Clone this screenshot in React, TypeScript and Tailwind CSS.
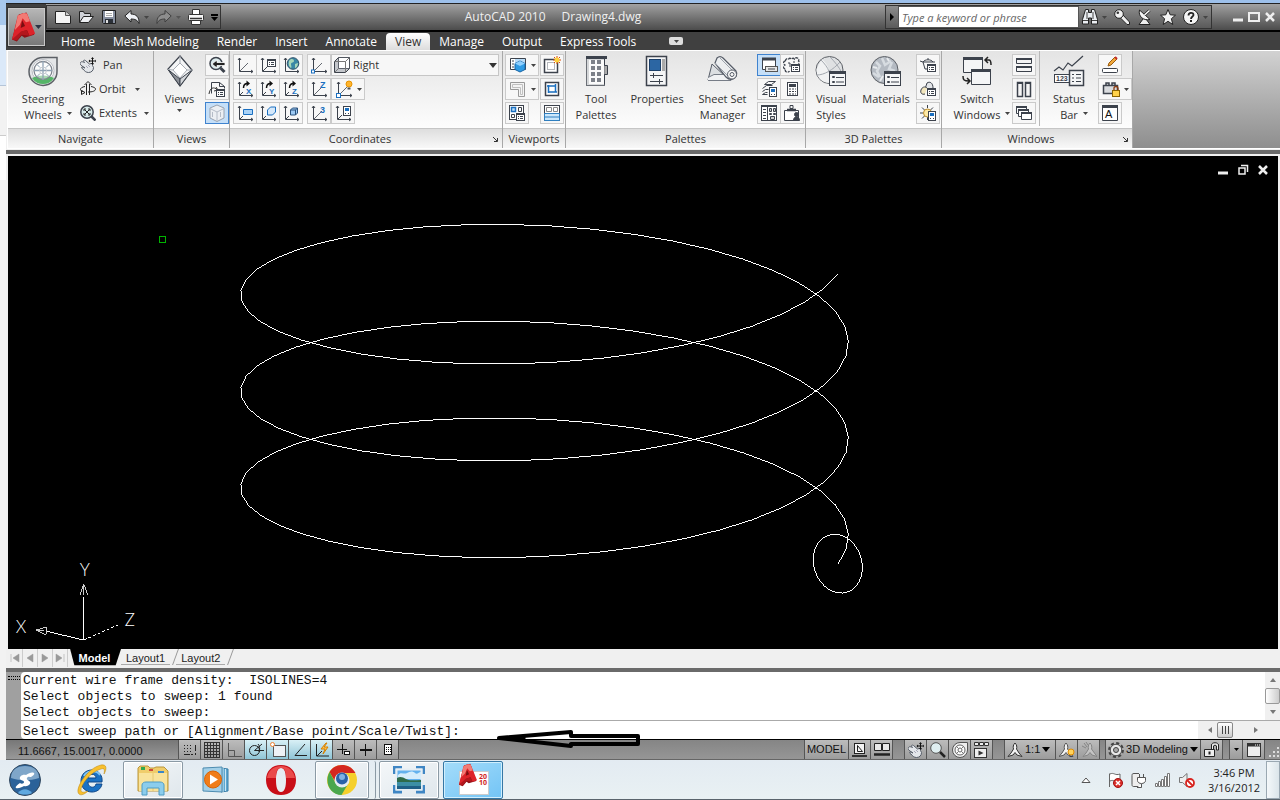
import { useState } from 'react';
import type { ReactNode } from 'react';
import clsx from 'clsx';

const INK = '#3c424c';
const BLUE = '#1a6fc0';

/* ---------- drawing helpers ---------- */

function Svg({ size = 16, children }: { size?: number; children: ReactNode }) {
  return (
    <svg width={size} height={size} viewBox={`0 0 ${size} ${size}`} fill="none" stroke={INK} className="shrink-0" aria-hidden="true">
      {children}
    </svg>
  );
}

function Caret({ className = 'text-[#444]' }: { className?: string }) {
  return (
    <svg width="5" height="3" viewBox="0 0 5 3" className={clsx('shrink-0', className)} aria-hidden="true">
      <path d="M0 0h5L2.5 3z" fill="currentColor" />
    </svg>
  );
}

function ListBadge({ x = 7, y = 7 }: { x?: number; y?: number }) {
  return (
    <g transform={`translate(${x} ${y})`}>
      <rect x="0.5" y="0.5" width="8" height="7" fill="#fff" />
      <path d="M0 1h9" strokeWidth="2" />
      <path d="M2 3.5h1M4 3.5h3M2 5.5h1M4 5.5h3" />
    </g>
  );
}

function CalcBadge({ x = 8, y = 6 }: { x?: number; y?: number }) {
  return (
    <g transform={`translate(${x} ${y})`}>
      <rect x="0.5" y="0.5" width="7" height="9" fill="#fff" />
      <rect x="2" y="2" width="4" height="3" fill={BLUE} stroke="none" />
      <path d="M2 7.5h1M5 7.5h1" />
    </g>
  );
}

function Axes({ diagonal = false, children }: { diagonal?: boolean; children?: ReactNode }) {
  return (
    <Svg size={18}>
      <path d="M3.5 2v13.5H17M2 4l1.5-2L5 4M15 14l2 1.5-2 1.5" />
      {diagonal && <path d="M4 15l8-8" strokeWidth="0.8" />}
      {children}
    </Svg>
  );
}

function RotateAxis({ letter }: { letter: string }) {
  return (
    <Axes>
      <path d="M4 15l3-3" />
      <path d="M7.5 8c0-3 1-4.5 4-4.5" stroke="#111" strokeWidth="1.5" />
      <path d="M10.5 .5l3.5 3-3.500 3z" fill="#111" stroke="none" />
      <text x="10" y="14" fontSize="8" fontWeight="700" fontFamily="Liberation Sans, sans-serif" fill={BLUE} stroke="none">{letter}</text>
    </Axes>
  );
}

const icons: Record<string, ReactNode> = {
  newFile: (
    <Svg><path d="M.5 2.5h10l5 4v8H.5z" fill="#f4f4f4" stroke="#222" /><path d="M10.5 2.5v4h5" stroke="#555" fill="#cfcfcf" /></Svg>
  ),
  open: (
    <Svg>
      <path d="M1.5 13.5v-11h4l1 2h6v3" fill="#cfd2d8" stroke="#222" />
      <path d="M1.5 13.5l4-6h10l-5 6z" fill="#eef0f3" stroke="#222" />
    </Svg>
  ),
  save: (
    <Svg>
      <path d="M1.5 1.5h13v13h-12l-1-1z" fill="#8890a0" stroke="#222" />
      <rect x="4" y="2" width="8" height="6" fill="#fff" stroke="none" />
      <path d="M5 4.5h6M5 6.5h6" stroke="#aaa" />
      <rect x="4" y="10" width="8" height="4" fill="#2b3038" stroke="none" />
      <rect x="5" y="11" width="2" height="3" fill="#ddd" stroke="none" />
    </Svg>
  ),
  undo: <Svg><path d="M.8 7L7 1.500V5c5 0 8.500 3 8 9.500-1.500-3.500-4-4.500-8-4.500v3z" fill="#eef0f4" stroke="#222" /></Svg>,
  redo: <Svg><path d="M15.200 7L9 1.500V5c-5 0-8.500 3-8 9.500C2.500 11 5 10 9 10v3z" fill="#8d8d8d" stroke="#3f3f3f" /></Svg>,
  print: (
    <Svg>
      <path d="M4.500 5V.5h7V5" fill="#fff" stroke="#333" />
      <rect x="0.5" y="5.500" width="15" height="6" rx="1" fill="#f6f6f6" stroke="#333" />
      <path d="M2 9.500h12" stroke="#333" strokeWidth="1.500" />
      <path d="M3.500 15.500v-4h9v4z" fill="#fff" stroke="#333" />
    </Svg>
  ),
  binoculars: (
    <Svg>
      <path d="M3.500.5h3v3h3v-3h3l3 10v4.500h-6V9h-3v6h-6v-4.500z" fill="#eceff3" stroke="#222" />
      <path d="M1 11.500h5M10 11.500h5M5 3v7M11 3v7" stroke="#444" />
    </Svg>
  ),
  key: (
    <Svg>
      <path d="M8.500 5.500l7 7.500v2.500h-2.500L6 8.500z" fill="#eee" stroke="#222" />
      <circle cx="5" cy="5" r="4.300" fill="#f2f2f2" stroke="#222" />
      <circle cx="3.800" cy="3.800" r="1.300" fill="#333" stroke="none" />
    </Svg>
  ),
  dish: (
    <Svg>
      <path d="M6 10l-4 5.500h11L9 10" fill="#eee" stroke="#222" />
      <path d="M2.500 1C1 7 6 12 13 10.500z" fill="#f4f4f4" stroke="#222" />
      <path d="M7.500 6l5-4.500" stroke="#222" strokeWidth="3" />
      <path d="M7.500 6l5-4.500" stroke="#fff" strokeWidth="1.500" />
    </Svg>
  ),
  star: <Svg><path d="M8 .5l2.200 5.300 5.300.4-4.100 3.500 1.400 5.800L8 12.300l-4.800 3.200 1.400-5.800L.5 6.200l5.300-.4z" fill="#f4f4f4" stroke="#222" /></Svg>,
  help: (
    <Svg>
      <circle cx="8" cy="8" r="7.500" fill="#f4f4f4" stroke="#222" />
      <path d="M5.500 6.500c0-3.500 5-3.500 5-.5 0 1.500-2.500 1.500-2.500 4" stroke="#222" strokeWidth="1.800" />
      <path d="M7 11h2v2H7z" fill="#222" stroke="none" />
    </Svg>
  ),
  wheel: (
    <Svg size={32}>
      <path d="M16 2.500h14V16A14 14 0 1116 2.500z" fill="#e3e5e7" stroke="#5c6066" strokeWidth="1.500" />
      <circle cx="16" cy="15.500" r="11" fill="#fff" stroke="#b9bdc3" />
      <path d="M5 23c6-3.500 16-3.500 22 0a13 13 0 01-22 0z" fill="#56b568" stroke="none" />
      <circle cx="16" cy="15.500" r="9" fill="#fafbfc" fillOpacity="0.500" stroke="#7f858e" strokeWidth="1.300" />
      <path d="M16 6v19M7 15.500h18" stroke="#8fa3b5" strokeWidth="1.300" />
      <circle cx="16" cy="15.500" r="3.500" stroke="#c5cad0" />
      <path d="M10 9.500l3 3M22 9.500l-3 3M10 21.500l3-3M22 21.500l-3-3" stroke="#8fa3b5" />
    </Svg>
  ),
  pan: (
    <Svg>
      <path d="M.5 5.500c1-1.500 2.500-.5 4 0-2-2-.5-3 1-2l4 3.500 1.500-.5c2 0 2 1 1.500 2l1 2c0 3-2 5-5 5-2.500 0-4-1.500-5.500-3.500-1.500-.5-2-1.500-1-2 1 0 2 .5 3 1L2 9C.5 8-.5 6.500.5 5.500z" fill="#e3e6ea" stroke="#565d68" />
      <path d="M6 9l2 2M8 8l2 2" stroke="#aab" />
      <path d="M12.500 1v6M9.500 4h6" stroke="#111" />
      <path d="M11 2h3l-1.500-2zM11 6h3l-1.500 2zM10 2.500v3L8.500 4zM15 2.500v3L16 4z" fill="#111" stroke="none" />
    </Svg>
  ),
  orbit: (
    <Svg>
      <path d="M11 5.500c3 .5 4.500 1.500 4.500 2.500 0 2-3 3-7.500 3M5 5.500C2 6 .5 7 .5 8.500c0 1 1 1.500 2.500 2" stroke="#222" />
      <path d="M6.500 3v11M9.500 3v11M4.500 4L8 .5 11.500 4M5 11.500l-3.500-2v4z" stroke="#222" />
    </Svg>
  ),
  extents: (
    <Svg>
      <circle cx="7" cy="7" r="6.200" fill="#d7eaea" strokeWidth="1.500" />
      <path d="M11.500 11.500l4 4" strokeWidth="2.500" />
      <path d="M4.500 4.500l5 5M9.500 4.500l-5 5M4 6V4h2M8 4h2v2M10 8v2H8M6 10H4V8" stroke="#222" />
    </Svg>
  ),
  cube: (
    <Svg size={32}>
      <path d="M16 1l12 14-12 16L4 14z" fill="#f4f5f6" strokeWidth="1.200" />
      <path d="M4 14.500L16 24v7z" fill="#8c9097" />
      <path d="M28 15l-12 9v7z" fill="#d3d6da" />
      <path d="M16 8l7 7-7 8-7-8z" fill="#fff" stroke="#a8adb5" />
      <path d="M16 1v7M4 14.500l5 .5M28 15h-5" stroke="#a8adb5" />
    </Svg>
  ),
  viewPrev: (
    <Svg size={18}>
      <circle cx="8" cy="7.500" r="6" fill="#dcebed" strokeWidth="1.500" />
      <path d="M12.500 12l4 4" strokeWidth="3" />
      <path d="M4 8l5-4v2.500h8v3H9V12z" fill="#222" stroke="#fff" strokeWidth="0.800" />
    </Svg>
  ),
  namedView: (
    <Svg size={18}>
      <path d="M3.500 13.500v-11h8l5 4v2M11.500 2.500v4h5" />
      <path d="M1 14c1-6 4-8 9-4M8 7l2 3-4 1" stroke="#333" />
      <ListBadge x={8} y={9} />
    </Svg>
  ),
  cubePale: (
    <Svg size={18}>
      <path d="M9 1l7 3v10l-7 3.500L2 14V4z" fill="#eceff3" stroke="#9aa3b0" />
      <path d="M2 4.500L9 8l7-3.500M9 8v9M4.500 8v5M12.500 8v5" stroke="#b5bcc7" />
    </Svg>
  ),
  axes: <Axes diagonal />,
  axesList: <Axes><ListBadge x={8} y={3} /><path d="M4 15l4-4" /></Axes>,
  axesWorld: (
    <Axes>
      <circle cx="11" cy="7.500" r="5.800" fill="#3a87a5" stroke="#2c4f66" />
      <path d="M7 5c2-3 5-2 5 0s-3 1-3 3 1 3 0 4c-2-1-3-4-2-7zM13 8l3-1c0 3-2 5-3 5z" fill="#a9d6b8" stroke="none" />
    </Axes>
  ),
  axesOrigin: <Axes diagonal><rect x="1.500" y="14" width="3" height="3" fill="#fff" stroke={BLUE} /></Axes>,
  axesX: <RotateAxis letter="X" />,
  axesY: <RotateAxis letter="Y" />,
  axesZ: <RotateAxis letter="Z" />,
  axesZv: (
    <Axes diagonal>
      <text x="10" y="8" fontSize="9" fontWeight="700" fontFamily="Liberation Sans, sans-serif" fill={BLUE} stroke="none">Z</text>
    </Axes>
  ),
  axesBulb: (
    <Axes diagonal>
      <rect x="1.500" y="13.500" width="4" height="4" fill="#fff" stroke={BLUE} />
      <circle cx="14" cy="4" r="3" fill="#ffb52e" stroke="#e89300" />
      <path d="M12.500 8.500h3" stroke="#555" strokeWidth="2" />
    </Axes>
  ),
  axesFace: <Axes><path d="M7.500 5.500h9v5h-9z" fill="#a9d2f7" stroke={BLUE} /><path d="M4 15l3-3" /></Axes>,
  axesView: <Axes><path d="M8.500 6l3-3h5v5l-3 3h-5z" fill="#d5e8fa" stroke={BLUE} /><path d="M4 15l3-3" /></Axes>,
  axesObject: <Axes><path d="M8.500 6l2-2h5v5l-2 2h-5zM8.500 6h5v5M13.500 6l2-2" fill="#9cc9f3" stroke="#2a517c" /><path d="M4 15l3-3" /></Axes>,
  axes3: (
    <Axes diagonal>
      <text x="10" y="9" fontSize="9" fontWeight="700" fontFamily="Liberation Sans, sans-serif" fill={BLUE} stroke="none">3</text>
    </Axes>
  ),
  axesCalc: <Axes><CalcBadge x={9} y={2} /><path d="M4 15l4-4" /></Axes>,
  box: (
    <Svg>
      <path d="M.5 4.500l4-4h11v11l-4 4H.5z" fill="#c4c7cc" />
      <path d="M4.500.5h11v11h-11z" fill="#fff" strokeWidth="0.800" />
      <path d="M.5 4.500h11v11M.5 15.500l4-4M11.500 4.500l4-4" stroke="#777" />
    </Svg>
  ),
  vpModel: (
    <Svg size={18}>
      <path d="M1.500 2.500h15v11h-15z" fill="#b9dcf8" />
      <path d="M2 3h4v10H2z" fill="#fff" stroke="none" />
      <path d="M3 5h2M3 8h2M3 11h2" />
      <path d="M11 5l5 2.500v6L11 16l-5-2.500v-6z" fill="#2f9be4" stroke="#1865a6" />
      <path d="M6 7.500l5 2.500 5-2.500L11 5z" fill="#8fd0ff" stroke="none" />
    </Svg>
  ),
  vpNew: (
    <Svg size={18}>
      <rect x="1.500" y="3.500" width="13" height="13" fill="#fff" strokeWidth="1.500" />
      <rect x="4.500" y="6.500" width="7" height="7" stroke="#b5b8bd" />
      <path d="M14 0v8M10 4h8M11 1l6 6M17 1l-6 6" stroke="#e04a00" />
      <circle cx="14" cy="4" r="2.500" fill="#ffd23c" stroke="none" />
    </Svg>
  ),
  vpPoly: (
    <Svg size={18}>
      <path d="M1.500 2.500h14v14h-6v-7h-8z" fill="#f4f4f4" stroke="#999" />
      <path d="M3.500 4.500h10v10h-2v-7h-8z" stroke="#c0c0c0" />
    </Svg>
  ),
  vpClip: (
    <Svg size={18}>
      <rect x="2.500" y="2.500" width="13" height="13" fill="#fff" strokeWidth="1.500" />
      <path d="M4 6h9M5 12h9M5.500 5v8M12.500 4v8" stroke={BLUE} strokeWidth="1.500" />
    </Svg>
  ),
  vpNamed: (
    <Svg size={18}>
      <rect x="1.500" y="1.500" width="14" height="14" fill="#fff" />
      <rect x="3.500" y="3.500" width="4" height="4" fill="#bfe0fa" stroke={BLUE} strokeWidth="1.500" />
      <path d="M10.500 3.500h3v4h-3zM3.500 10.500h3v3h-3z" />
      <ListBadge x={8} y={9} />
    </Svg>
  ),
  vpJoin: (
    <Svg size={18}>
      <rect x="1.500" y="1.500" width="15" height="15" fill="#fff" />
      <path d="M3.500 3.500h5v4h-5zM10.500 3.500h4v4h-4z" stroke="#888" />
      <path d="M1.500 9.500h15v7h-15zM1 13h16" fill="#cbe7fb" stroke="#2f7fc0" />
    </Svg>
  ),
  toolPalettes: (
    <Svg size={32}>
      <rect x="6.500" y="1.500" width="18" height="29" fill="#d5d7d9" stroke="#6b6f76" />
      <path d="M6 2.500h21" strokeWidth="3" />
      <rect x="9" y="5" width="15" height="24" fill="#fbfbfb" stroke="none" />
      <path d="M24.500 4v6.500h3v9h-3v10" fill="#aaa" />
      <g fill="#7d8189" stroke="none">
        {[5, 11, 17, 23].map((y) => (
          <g key={y}><rect x="11" y={y} width="4" height="4" /><rect x="17" y={y} width="4" height="4" /></g>
        ))}
      </g>
    </Svg>
  ),
  properties: (
    <Svg size={32}>
      <rect x="5.500" y="1.500" width="20" height="29" fill="#f4f5f6" strokeWidth="1.500" />
      <rect x="8.500" y="4.500" width="11" height="11" fill="#2c66a3" stroke="#1c3f68" />
      <path d="M22.500 4v12" stroke="#aaa" strokeWidth="3" />
      <path d="M9 20.500h13M12.500 18v5M9 26.500h13M18.500 24v5" />
    </Svg>
  ),
  sheetSet: (
    <Svg size={32}>
      <path d="M1 25l4-16 14 13" fill="#dcdfe2" stroke="#555b66" />
      <path d="M1 22.500l6-3h14l3 6H1" fill="#f1f2f4" stroke="#777d87" />
      <path d="M8 8l2-5c2-2 4-2 6 0l13 13c2 3 0 7-3 8s-5 0-7-2z" fill="#eceef0" stroke="#555b66" strokeWidth="1.200" />
      <path d="M13 3L25 15M8 8l13 13" stroke="#9da3ac" />
      <circle cx="25" cy="19.500" r="4.500" fill="#f9f9f9" stroke="#555b66" />
      <circle cx="25" cy="19.500" r="2" stroke="#555b66" />
    </Svg>
  ),
  cmdLine: (
    <Svg size={18}>
      <path d="M2.500 2.500h13v11h-13z" fill="#fff" />
      <path d="M2 3h14" strokeWidth="3" />
      <rect x="5.500" y="10.500" width="12" height="5" fill="#e6e6e6" stroke="#555" />
      <path d="M8 13h7" />
    </Svg>
  ),
  markup: (
    <Svg size={18}>
      <path d="M2.500 5a2 2 0 013-2 2 2 0 013 0 2 2 0 013 0 2 2 0 014 2 2 2 0 010 3M2.500 5a2 2 0 000 4 2 2 0 000 4 2 2 0 004 2" strokeDasharray="3 1" strokeWidth="1.300" />
      <path d="M5 7h2v4M10 6h2" />
      <ListBadge x={8} y={8} />
    </Svg>
  ),
  layers: (
    <Svg size={18}>
      <path d="M8.500 1.500h7l-4 3h-7zM2.500 8.500l4-3h6M2.500 11.500l3-2h3M2.500 14.500l3-2h2M2.500 14.500h5" />
      <CalcBadge x={9} y={7} />
    </Svg>
  ),
  calc: (
    <Svg size={18}>
      <rect x="4.500" y="2.500" width="10" height="13" fill="#fff" />
      <rect x="6" y="4" width="7" height="3" fill={INK} stroke="none" />
      <path d="M6 9h7M6 11.500h7M6 14h7" strokeDasharray="2 1" />
    </Svg>
  ),
  designCenter: (
    <Svg size={18}>
      <rect x="1.500" y="1.500" width="15" height="15" fill="#fff" />
      <path d="M1 2h16" strokeWidth="2" />
      <path d="M3 5.500h3M3 8.500h3M3 11.500h3M3 14.500h3M7.500 2v14" />
      <path d="M9.500 4.500h2v3h-2zM13.500 4.500h2v3h-2zM9.500 9.500h2v1h-2zM13.500 9.500h2v1h-2zM10.500 12.500h4v3h-4z" fill="#ccc" />
    </Svg>
  ),
  xref: (
    <Svg size={18}>
      <path d="M1.500 6.500h14v10h-14z" fill="#fff" />
      <path d="M4 6h9" strokeWidth="2.500" />
      <path d="M7 1.500h3v3H7z" />
      <circle cx="13.500" cy="10.500" r="2" fill={INK} />
      <path d="M10.500 16.500c0-5 6-5 6 0z" fill={INK} />
    </Svg>
  ),
  visualStyles: (
    <Svg size={32}>
      <circle cx="14.500" cy="15" r="13.500" fill="#dfe1e3" stroke="#5c6066" />
      <path d="M7 4c7 6 9 15 8 24C6 28 1 21 1.500 14" fill="#f1f2f3" stroke="none" />
      <path d="M6 5c8 8 10 14 9 23M25 7C18 15 9 20 2 20M15 2c5 5 9 10 12 16" stroke="#a3a8af" />
      <rect x="14.500" y="16.500" width="16" height="14" fill="#f5f6f7" />
      <path d="M14 17.500h17" strokeWidth="3" />
      <path d="M17.500 21.500h2v1h-2zM17.500 26.500h2v1h-2zM21 22.500h8M21 27h8" />
    </Svg>
  ),
  materials: (
    <Svg size={32}>
      <circle cx="14.500" cy="15" r="13.500" fill="#b4bac2" stroke="#5c6066" />
      <path d="M6 7l4 4-3 5 3 6M12 3l3 7 6-4M3 18l6 4M22 7l-3 7 6 2" stroke="#d7dce1" strokeWidth="2.500" />
      <path d="M3 12l4 1M10 26l3-5M17 3l2 3" stroke="#e8ebee" strokeWidth="2" />
      <rect x="14.500" y="16.500" width="16" height="14" fill="#f5f6f7" />
      <path d="M14 17.500h17" strokeWidth="3" />
      <path d="M17.500 21.500h2v1h-2zM17.500 26.500h2v1h-2zM21 22.500h8M21 27h8" />
    </Svg>
  ),
  render: (
    <Svg size={18}>
      <path d="M1 5l3 1 2 7h2M4 6c2-3 8-3 10 0M9 3.500V2M4 6h12" fill="#eee" />
      <ListBadge x={8} y={8} />
    </Svg>
  ),
  lamp: (
    <Svg size={18}>
      <path d="M6 9l2-6c3-2 6 0 6 5" fill="#e4e6e9" />
      <path d="M6 14c-3 1-5-1-4-4s4-4 6-2" fill="#f2e6bd" />
      <ListBadge x={8} y={8} />
    </Svg>
  ),
  sun: (
    <Svg size={18}>
      <path d="M8.500 1v3M8.500 13v3M1 9h3M3 3.500l2.500 2.500M14 3.500L11.500 6M3 14.500L5.500 12" />
      <circle cx="8.500" cy="9" r="4" fill="#ffeaa6" stroke="#b98b2c" />
      <CalcBadge x={9} y={7} />
    </Svg>
  ),
  switchWin: (
    <Svg size={32}>
      <path d="M2.500 3.500h19v14h-19z" fill="#f4f5f6" />
      <path d="M2 3.500h20" strokeWidth="3" />
      <path d="M10.500 15.500h19v14h-19z" fill="#f4f5f6" />
      <path d="M10 15.500h20" strokeWidth="3" />
      <path d="M24 5h4c2 0 2 2 2 5M27 2l-3 3 3 3M2 21c0 4 1 5 6 5M6 23l3 3-3 3" stroke="#222" strokeWidth="1.500" />
    </Svg>
  ),
  tileH: <Svg size={18}><path d="M1.500 2.500h15v5h-15zM1.500 10.500h15v5h-15z" fill="#f5f5f5" /><path d="M1 3h16M1 11h16" strokeWidth="2" /></Svg>,
  tileV: <Svg size={18}><path d="M2.500 2.500h5v14h-5zM10.500 2.500h5v14h-5z" fill="#f5f5f5" strokeWidth="1.500" /><path d="M2 3h6M10 3h6" strokeWidth="2" /></Svg>,
  cascade: (
    <Svg size={18}>
      <path d="M1.500 2.500h10v7h-10z" fill="#fff" /><path d="M1 3h11" strokeWidth="2" />
      <path d="M3.500 5.500h10v7h-10z" fill="#fff" /><path d="M3 6h11" strokeWidth="2" />
      <path d="M6.500 8.500h10v7h-10z" fill="#fff" /><path d="M6 9h11" strokeWidth="2" />
    </Svg>
  ),
  statusBar: (
    <Svg size={32}>
      <path d="M1 16l5-4 4 3 5-7 4 3L30 1" strokeWidth="1.200" />
      <rect x="1.500" y="19.500" width="15" height="8" fill="#fff" />
      <text x="3" y="26" fontSize="7" fontWeight="700" fontFamily="Liberation Sans, sans-serif" fill={INK} stroke="none">123</text>
      <rect x="16.500" y="15.500" width="14" height="15" fill="#f4f5f6" strokeWidth="1.500" />
      <path d="M19 19.500h2M23 19.500h5M19 23h2M23 23h5M19 26.500h2M23 26.500h5" />
    </Svg>
  ),
  pencil: (
    <Svg size={18}>
      <rect x="1.500" y="12.500" width="15" height="4" rx="1" fill="#fff" />
      <path d="M7 10l1-3 6-6 2 2-6 6z" fill="#f2a93b" stroke="#9a5c10" />
      <path d="M14 1l2 2" stroke="#c42a2a" strokeWidth="2" />
    </Svg>
  ),
  lockUi: (
    <Svg size={18}>
      <path d="M1.500 5.500h14v8h-14zM4 5V3h3v2M10 5V3h3v2" fill="#d9dbde" strokeWidth="1.500" />
      <rect x="10.500" y="10.500" width="7" height="6" fill="#ffd24a" stroke="#8a6300" />
      <path d="M12 10V8c0-2 4-2 4 0v2" stroke="#8a3b10" strokeWidth="1.300" />
    </Svg>
  ),
  textWin: (
    <Svg size={18}>
      <path d="M1.500 1.500h15v15h-15z" fill="#fff" />
      <path d="M1 2.500h16" strokeWidth="3" />
      <text x="4" y="14" fontSize="11" fontFamily="Liberation Sans, sans-serif" fill="#111" stroke="none">A</text>
    </Svg>
  ),
  snap: <Svg><path d="M2 3.500h9M2 6.500h9M2 9.500h9" strokeDasharray="1 2" stroke="#222" /><path d="M13.500 3v7M13.500 11v2M2 12.500h9" stroke="#222" strokeDasharray="6 1" /></Svg>,
  grid: <Svg><path d="M0 .5h16M0 3.500h16M0 6.500h16M0 9.500h16M0 12.500h16M0 15.500h16M.5 0v16M3.500 0v16M6.500 0v16M9.500 0v16M12.500 0v16M15.500 0v16" stroke="#333" /></Svg>,
  ortho: <Svg><path d="M2.500 1v13.500H16M2.500 8.500h6v6" stroke="#555" /></Svg>,
  polar: <Svg><circle cx="6.500" cy="8.500" r="5" stroke="#222" /><path d="M14 2L6.500 8.500H16M10 2c2 2 2 5 1 8" stroke="#222" /></Svg>,
  osnap: <Svg><rect x="3.500" y="3.500" width="12" height="11" fill="#eef1f5" stroke="#555" /><circle cx="2.500" cy="2.500" r="2" fill="#fff" stroke="#f08030" /></Svg>,
  otrack: <Svg><path d="M13 2L3 13.500h12" stroke="#222" /></Svg>,
  ducs: <Svg><path d="M2.500 2v12H15M3 14l5-5" stroke="#222" /><path d="M12 1L7 7h4l-2 5 5-7h-4l3-4z" fill="#ffc04a" stroke="#d58000" /></Svg>,
  dyn: <Svg><path d="M6.500 2v10M1 7.500h10" stroke="#111" /><rect x="8.500" y="9.500" width="5" height="3" fill="#fff" stroke="#111" /></Svg>,
  lwt: <Svg><path d="M7.500 2v12" stroke="#111" /><path d="M2 8h12" stroke="#111" strokeWidth="2" /></Svg>,
  qp: <Svg><rect x="4.500" y="2.500" width="7" height="10" fill="#fff" stroke="#111" /><path d="M6 5.500h5M6 7.500h5M6 9.500h5" stroke="#111" strokeDasharray="1 1" /></Svg>,
  modelSpace: <Svg><rect x="2.500" y="1.500" width="10" height="10" fill="#f4f4f4" stroke="#222" /><path d="M5.500 3.500v6h5z" stroke="#222" /><path d="M0 14h15" stroke="#333" strokeWidth="2" /></Svg>,
  quickView: <Svg><path d="M.5 1.500h7v7h-7zM8.500 1.500h7v7h-7z" fill="#e8e8e8" stroke="#222" /><path d="M0 12.500h16" stroke="#222" strokeWidth="2.500" /></Svg>,
  magnifier: <Svg><circle cx="6" cy="6" r="5.300" fill="#dfeef0" stroke="#555" /><path d="M10 10l5 5" stroke="#222" strokeWidth="2.500" /></Svg>,
  smallWheel: <Svg><path d="M8 .5h7.500V8A7.500 7.500 0 118 .5z" fill="#eee" stroke="#555" /><circle cx="8" cy="8" r="5" fill="#fff" stroke="#666" /><circle cx="8" cy="8" r="2" stroke="#666" /><path d="M4 4l2.500 2.500M12 4L9.500 6.500M4 12l2.500-2.500M12 12L9.500 9.500" stroke="#777" /></Svg>,
  motion: <Svg><path d="M.5.5h4v3h-4zM5.500.5h4v3h-4zM10.500.5h4v3h-4z" fill="#eee" stroke="#333" /><rect x="0.5" y="6.500" width="12" height="9" fill="#eee" stroke="#333" /><path d="M4.500 8.500l5 2.500-5 2.500z" fill="#333" stroke="none" /></Svg>,
  annoScale: <Svg><path d="M8 1C6 3 6 5 6.500 7L4 11l-3 3.500 5-1.500 2-2.500 2 2.500 5 1.500-3-3.500L9.500 7C10 5 10 3 8 1z" fill="#f4f4f4" stroke="#333" /></Svg>,
  annoVis: (
    <Svg>
      <path d="M7 1C5 3 5 5 5.500 7L3 11l-3 3.500L5 13l2-2.500L9 13l5 1.500L8.500 7C9 5 9 3 7 1z" fill="#f4f4f4" stroke="#555" />
      <circle cx="12" cy="10" r="3" fill="#ffd35c" stroke="#e08a00" /><path d="M10.500 14.500h3" />
    </Svg>
  ),
  annoAuto: <Svg><path d="M9 1C7 3 7 5 7.500 7L5 11l-3 3.500L7 13l2-2.500 2 2.500 5 1.500L10.500 7C11 5 11 3 9 1zM3 1l3 4M1 4l4 2M5 0l2 3" fill="#c4c4c4" stroke="#858585" /></Svg>,
  gear: (
    <Svg>
      <circle cx="8" cy="8" r="6.700" stroke="#444" strokeWidth="2.500" strokeDasharray="3 2.260" />
      <circle cx="8" cy="8" r="5.700" fill="#e8e8e8" stroke="#555" />
      <circle cx="8" cy="8" r="2.500" fill="#aaa" stroke="#444" />
    </Svg>
  ),
  unlock: <Svg><path d="M.5 7.500h10v7H.5z" fill="#eee" stroke="#222" /><path d="M7.500 7V3c0-3 7-3 7 0v5h-2V4c0-1-3-1-3 0v3" fill="#eee" stroke="#222" /><path d="M5.500 9.500v3" stroke="#222" strokeWidth="2" /></Svg>,
  cleanScreen: <Svg><rect x="1.500" y="1.500" width="13" height="13" fill="#eee" stroke="#333" /><path d="M1 3h14" stroke="#333" strokeWidth="3" /><path d="M9 3h1M11 3h1M13 3h1" stroke="#fff" /></Svg>,
};

/* ---------- ribbon ---------- */

function Tool({ icon, wide, active, first = true }: { icon: string; wide?: boolean; active?: boolean; first?: boolean }) {
  return (
    <button
      type="button"
      aria-label={icon}
      className={clsx(
        'flex h-[22px] shrink-0 items-center justify-center border',
        wide ? 'w-[34px] gap-1' : 'w-6',
        !first && '-ml-px',
        active ? 'border-[#3f83cf] bg-[#c5dff8]' : 'border-[#cacaca] bg-[#f7f7f7]',
      )}
    >
      {icons[icon]}
      {wide && <Caret />}
    </button>
  );
}

function BigTool({ icon, lines, caret, className }: { icon: string; lines: string[]; caret?: boolean; className: string }) {
  return (
    <button type="button" className={clsx('flex shrink-0 flex-col items-center pt-1 leading-4 text-[#333]', className)}>
      {icons[icon]}
      <span className="mt-1 whitespace-nowrap">{lines[0]}</span>
      {lines[1] && (
        <span className={clsx('flex items-center gap-[5px] whitespace-nowrap', caret && 'pl-[10px]')}>
          {lines[1]}
          {caret && <Caret className="mb-1 text-[#444]" />}
        </span>
      )}
      {!lines[1] && caret && <Caret className="mt-[2px] text-[#444]" />}
    </button>
  );
}

function Panel({ title, launcher, className, children }: { title: string; launcher?: boolean; className: string; children: ReactNode }) {
  return (
    <section className={clsx('flex shrink-0 flex-col border-r border-[#a8a8a8]', className)}>
      <div className="flex h-[77px] bg-linear-to-b from-[#e4e4e4] to-[#fdfdfd]">{children}</div>
      <h2 className={clsx('relative h-5 border-t border-[#c6c6c6] bg-linear-to-b from-[#dedede] to-[#f8f8f8] text-center leading-5 text-[#333]', launcher && 'pr-3')}>
        {title}
        {launcher && (
          <svg width="5" height="5" viewBox="0 0 5 5" className="absolute right-1 top-2" stroke="#333" fill="none" aria-hidden="true">
            <path d="M0 0l4 4M4.500 1v3.500H1" />
          </svg>
        )}
      </h2>
    </section>
  );
}

const column = 'flex flex-col gap-[2px] pt-[3px]';

function Ribbon() {
  return (
    <div className="ml-px flex h-[99px] border-y border-l border-white bg-linear-to-b from-[#d2d2d2] to-[#8e8e8e] text-[11px]">
      <Panel title="Navigate" className="w-[146px]">
        <BigTool icon="wheel" lines={['Steering', 'Wheels']} caret className="w-[70px]" />
        <div className="flex flex-col pt-[2px] text-[#333]">
          <button type="button" className="flex h-6 items-center gap-[7px] pl-[2px]">{icons.pan}Pan</button>
          <button type="button" className="flex h-6 items-center gap-[3px] pl-[2px]">{icons.orbit}Orbit<span className="w-1" /><Caret /></button>
          <button type="button" className="flex h-6 items-center gap-[3px] pl-[2px]">{icons.extents}Extents<span className="w-px" /><Caret /></button>
        </div>
      </Panel>
      <Panel title="Views" className="w-[76px]">
        <BigTool icon="cube" lines={['Views']} caret className="w-[51px]" />
        <div className={column}>
          <Tool icon="viewPrev" />
          <Tool icon="namedView" />
          <Tool icon="cubePale" active />
        </div>
      </Panel>
      <Panel title="Coordinates" launcher className="w-[273px]">
        <div className={clsx(column, 'w-full pl-[3px]')}>
          <div className="flex">
            <Tool icon="axes" /><Tool icon="axesList" first={false} /><Tool icon="axesWorld" first={false} />
            <div className="ml-1 flex flex-1 pr-[3px]">
              <Tool icon="axesOrigin" />
              <div className="relative flex-1">
                <span className="pointer-events-none absolute left-[3px] top-[3px]">{icons.box}</span>
                <select aria-label="UCS" defaultValue="Right" className="h-[22px] w-full appearance-none border border-[#c6c6c6] bg-[#f7f7f7] pl-[21px] text-[#333]">
                  <option>Right</option>
                  <option>Top</option>
                  <option>Front</option>
                </select>
                <svg width="8" height="5" viewBox="0 0 8 5" className="pointer-events-none absolute right-[2px] top-[9px]" aria-hidden="true">
                  <path d="M0 0h8L4 5z" fill="#333" />
                </svg>
              </div>
            </div>
          </div>
          <div className="flex">
            <Tool icon="axesX" /><Tool icon="axesY" first={false} /><Tool icon="axesZ" first={false} />
            <div className="ml-1 flex"><Tool icon="axesZv" /><Tool icon="axesBulb" wide /></div>
          </div>
          <div className="flex">
            <Tool icon="axesFace" /><Tool icon="axesView" first={false} /><Tool icon="axesObject" first={false} />
            <div className="ml-1 flex"><Tool icon="axes3" /><Tool icon="axesCalc" /></div>
          </div>
        </div>
      </Panel>
      <Panel title="Viewports" className="w-[63px]">
        <div className={clsx(column, 'w-full pl-[2px] pr-px')}>
          <div className="flex justify-between"><Tool icon="vpModel" wide /><Tool icon="vpNew" /></div>
          <div className="flex justify-between"><Tool icon="vpPoly" wide /><Tool icon="vpClip" /></div>
          <div className="flex justify-between"><Tool icon="vpNamed" /><Tool icon="vpJoin" /></div>
        </div>
      </Panel>
      <Panel title="Palettes" className="w-[240px]">
        <BigTool icon="toolPalettes" lines={['Tool', 'Palettes']} className="w-[60px]" />
        <BigTool icon="properties" lines={['Properties']} className="w-[62px]" />
        <BigTool icon="sheetSet" lines={['Sheet Set', 'Manager']} className="w-[69px]" />
        <div className={column}>
          <div className="flex"><Tool icon="cmdLine" active /><Tool icon="markup" first={false} /></div>
          <div className="flex"><Tool icon="layers" /><Tool icon="calc" first={false} /></div>
          <div className="flex"><Tool icon="designCenter" /><Tool icon="xref" first={false} /></div>
        </div>
      </Panel>
      <Panel title="3D Palettes" className="w-[136px]">
        <BigTool icon="visualStyles" lines={['Visual', 'Styles']} className="w-[50px]" />
        <BigTool icon="materials" lines={['Materials']} className="w-[60px]" />
        <div className={column}>
          <Tool icon="render" />
          <Tool icon="lamp" />
          <Tool icon="sun" />
        </div>
      </Panel>
      <Panel title="Windows" launcher className="w-[191px]">
        <BigTool icon="switchWin" lines={['Switch', 'Windows']} caret className="w-[70px]" />
        <div className={column}>
          <Tool icon="tileH" />
          <Tool icon="tileV" />
          <Tool icon="cascade" />
        </div>
        <div className="ml-[3px] h-[75px] w-px bg-[#b8b8b8]" />
        <BigTool icon="statusBar" lines={['Status', 'Bar']} caret className="w-[58px]" />
        <div className={column}>
          <Tool icon="pencil" />
          <Tool icon="lockUi" wide />
          <Tool icon="textWin" />
        </div>
      </Panel>
    </div>
  );
}

/* ---------- title bar and tabs ---------- */

const tabs = ['Home', 'Mesh Modeling', 'Render', 'Insert', 'Annotate', 'View', 'Manage', 'Output', 'Express Tools'];

function RedA({ className }: { className: string }) {
  return (
    <svg viewBox="0 0 24 32" className={className} aria-hidden="true">
      <path d="M7 3L15 1l8 23-10 3-3-2-5 6-5-2z" fill="#8c1116" />
      <path d="M6 4l6-2.500 3.500.5L24 23l-6 2-2.500-6-6 2L6 28l-6 1z" fill="#dd232a" />
      <path d="M10.500 9l3 6-4.500 2z" fill="#7a0d11" />
      <path d="M6 4l6-2.500 3.500.5 3 8-4 1-3.500-4-3 7-5 5z" fill="#f27a74" />
      <path d="M0 29l9-8 6-2 3 6-8-1-5 6z" fill="#b3171d" />
    </svg>
  );
}

function WindowButtons({ className, restore }: { className: string; restore?: boolean }) {
  return (
    <div className={clsx('flex shrink-0 items-center justify-end', className)}>
      <button type="button" aria-label="Minimize" className="h-3">
        <svg width="12" height="12" viewBox="0 0 12 12" aria-hidden="true"><path d="M1 7.500h10v3H1z" fill="#eee" /></svg>
      </button>
      <button type="button" aria-label="Restore" className="h-3">
        <svg width="12" height="12" viewBox="0 0 12 12" fill="none" stroke="#eee" strokeWidth="2" aria-hidden="true">
          {restore ? <path d="M2 4h6v6H2zM4 1.500h6.500V8" strokeWidth="1.500" /> : <path d="M1 2h10v8H1z" />}
        </svg>
      </button>
      <button type="button" aria-label="Close" className="h-3">
        <svg width="12" height="12" viewBox="0 0 12 12" fill="none" stroke="#eee" strokeWidth="2.500" aria-hidden="true"><path d="M2 2l8 8M10 2l-8 8" /></svg>
      </button>
    </div>
  );
}

function Header() {
  const [tab, setTab] = useState('View');

  return (
    <header className="flex h-[47px] border-t border-[#222] bg-[#404040] text-[12px] text-white">
      <button
        type="button"
        aria-label="Application menu"
        className="ml-px mt-[3px] flex h-10 w-[39px] shrink-0 items-center justify-between border border-[#333] bg-linear-to-b from-[#b8b8b8] to-[#777] pl-1 pr-[3px] shadow-[inset_0_0_0_1px_#c8c8c8]"
      >
        <RedA className="h-8 w-6" />
        <svg width="7" height="4" viewBox="0 0 7 4" aria-hidden="true"><path d="M0 0h7L3.500 4z" fill="#2b3444" /></svg>
      </button>
      <div className="flex min-w-0 flex-1 flex-col">
        <div className="flex h-[28px] items-center border-b-2 border-black bg-linear-to-b from-[#a2a2a2] to-[#4c4c4c]">
          <div className="flex h-6 w-[175px] shrink-0 items-center gap-[7px] border border-[#333] bg-linear-to-b from-[#8d8d8d] to-[#5a5a5a] pl-2">
            <button type="button" aria-label="New">{icons.newFile}</button>
            <button type="button" aria-label="Open">{icons.open}</button>
            <button type="button" aria-label="Save">{icons.save}</button>
            <button type="button" aria-label="Undo" className="flex items-center gap-1">{icons.undo}<Caret /></button>
            <button type="button" aria-label="Redo" className="flex items-center gap-1">{icons.redo}<Caret className="text-[#555]" /></button>
            <button type="button" aria-label="Print">{icons.print}</button>
            <button type="button" aria-label="Customize" className="flex flex-col gap-px">
              <span className="h-[2px] w-[7px] bg-black" />
              <svg width="7" height="4" viewBox="0 0 7 4" aria-hidden="true"><path d="M0 0h7L3.500 4z" /></svg>
            </button>
          </div>
          <h1 className="flex flex-1 justify-center gap-4 whitespace-nowrap text-[#f0f0f0]"><span>AutoCAD 2010</span><span>Drawing4.dwg</span></h1>
          <div className="flex h-6 shrink-0 items-center border border-[#333] bg-linear-to-b from-[#8d8d8d] to-[#5a5a5a]">
            <span className="flex w-3 justify-center">
              <svg width="4" height="8" viewBox="0 0 4 8" aria-hidden="true"><path d="M0 0l4 4-4 4z" /></svg>
            </span>
            <input
              type="text"
              aria-label="Search"
              placeholder="Type a keyword or phrase"
              className="h-[22px] w-[181px] border border-[#555] bg-white pl-[3px] text-[11px] italic text-black placeholder:text-[#666]"
            />
            <div className="flex items-center gap-[7px] px-[3px]">
              <button type="button" aria-label="Find" className="flex items-center gap-1">{icons.binoculars}<Caret /></button>
              <button type="button" aria-label="Subscription">{icons.key}</button>
              <button type="button" aria-label="Communication">{icons.dish}</button>
              <button type="button" aria-label="Favorites">{icons.star}</button>
              <button type="button" aria-label="Help" className="flex items-center gap-1">{icons.help}<Caret /></button>
            </div>
          </div>
          <WindowButtons className="w-[68px] gap-1 pr-1" />
        </div>
        <nav className="flex flex-1 items-end bg-[#404040] pl-[6px]" role="tablist">
          {tabs.map((name) => (
            <button
              key={name}
              type="button"
              role="tab"
              aria-selected={tab === name}
              onClick={() => setTab(name)}
              className={clsx(
                'h-[17px] whitespace-nowrap px-[9px] leading-[17px]',
                tab === name && 'rounded-t-sm bg-linear-to-b from-white to-[#dcdcdc] text-[#333]',
              )}
            >
              {name}
            </button>
          ))}
          <button type="button" aria-label="Minimize ribbon" className="mb-[5px] ml-6 flex h-2 w-[14px] items-center justify-center rounded-xs bg-[#ddd]">
            <Caret />
          </button>
        </nav>
      </div>
    </header>
  );
}

/* ---------- drawing area ---------- */

// three turn helix, seen from slightly above
function helixPoints() {
  const points: string[] = [];
  for (let deg = 15; deg <= 1095; deg += 8) {
    const t = (deg * Math.PI) / 180;
    const x = 545.5 + 304.5 * Math.cos(t);
    const y = 246 + 93 * Math.sin(t) + (97 * deg) / 360;
    points.push(`${x.toFixed(1)},${y.toFixed(1)}`);
  }
  return points.join(' ');
}

function DrawingArea() {
  return (
    <main className="relative min-h-[480px] flex-1 bg-black">
      <svg viewBox="8 156 1270 494" preserveAspectRatio="xMinYMin meet" className="absolute inset-0 h-full w-full" fill="none" stroke="#fff" shapeRendering="crispEdges" aria-label="Helix">
        <polyline points={helixPoints()} />
        <ellipse cx="839.5" cy="564.5" rx="24" ry="30" transform="rotate(-18 839.5 564.5)" />
        <rect x="159.5" y="236.5" width="6" height="6" stroke="#00b400" />
        <path d="M83.5 641V598M83.5 641L46 632" />
        <path d="M80 596l4-11 4 11M84 586v10" stroke="#ccc" />
        <path d="M47 628l-11 3 10 5zM36 631h8" stroke="#ccc" />
        <path d="M84 641l34-15" strokeDasharray="3 2" />
        <g fill="#fff" stroke="none" fontSize="17" fontWeight="300" fontFamily="Lato, sans-serif" textAnchor="middle">
          <text x="21" y="634">X</text>
          <text x="85" y="577">Y</text>
          <text x="130" y="627">Z</text>
        </g>
      </svg>
      <div className="absolute right-[9px] top-[8px]"><WindowButtons className="gap-2" restore /></div>
    </main>
  );
}

function LayoutTabs() {
  return (
    <div className="flex h-[18px] items-stretch bg-[#f0f0f0] font-['Liberation_Sans',sans-serif] text-[11px] leading-[19px] text-[#222]">
      {['M3 4v8M11 4v8L5 8z', 'M10 4v8L4 8z', 'M4 4v8l6-4z', 'M3 4v8l6-4zM11 4v8'].map((d, i) => (
        <button key={d} type="button" aria-label={['First', 'Previous', 'Next', 'Last'][i]} className="w-[15px] border-r border-[#ccc]">
          <svg width="14" height="16" viewBox="0 0 14 16" fill="#999" stroke="#999" strokeWidth="0.5" aria-hidden="true"><path d={d} /></svg>
        </button>
      ))}
      <button type="button" className="w-[53px] bg-black font-bold leading-[18px] text-white [clip-path:polygon(4%_0,100%_0,90%_90%,12%_90%)]">Model</button>
      {['Layout1', 'Layout2'].map((name) => (
        <div key={name} className="flex">
          <button type="button" className="mb-[2px] border-b border-[#aaa] px-[5px]">{name}</button>
          <span className="mb-[2px] w-[6px] -skew-x-[20deg] border-r border-[#999]" />
        </div>
      ))}
    </div>
  );
}

/* ---------- command window ---------- */

function ScrollArrow({ d, label }: { d: string; label: string }) {
  return (
    <button type="button" aria-label={label} className="flex items-center justify-center">
      <svg width="8" height="8" viewBox="0 0 8 8" fill="#777" aria-hidden="true"><path d={d} /></svg>
    </button>
  );
}

function CommandWindow() {
  return (
    <section className="relative flex h-[67px] bg-[#a0a0a0] font-['Liberation_Mono',monospace] text-[13px] text-[#111]">
      <div className="w-[15px] shrink-0 pl-[2px] pt-1">
        <div className="h-1 w-3 border-y border-dotted border-black" />
      </div>
      <div className="flex min-w-0 flex-1 flex-col rounded-l-sm bg-white">
        <div className="flex h-[49px] border-b border-[#aaa]">
          <div className="flex-1 whitespace-pre pl-[2px] pt-px leading-4">
            <p>{'Current wire frame density:  ISOLINES=4'}</p>
            <p>Select objects to sweep: 1 found</p>
            <p>Select objects to sweep:</p>
          </div>
          <div className="flex w-[15px] flex-col justify-between bg-[#f0f0f0] py-1">
            <ScrollArrow d="M1 6l3-4 3 4z" label="Scroll up" />
            <div className="h-4 rounded-xs border border-[#999] bg-linear-to-r from-white to-[#ccc]" />
            <ScrollArrow d="M1 2l3 4 3-4z" label="Scroll down" />
          </div>
        </div>
        <div className="flex h-[18px] items-stretch">
          <label htmlFor="command" className="whitespace-pre pl-[2px] leading-[22px]">Select sweep path or [Alignment/Base point/Scale/Twist]:</label>
          <input id="command" type="text" className="min-w-0 flex-1 bg-transparent pl-2 outline-none" />
          <div className="flex w-[66px] items-center justify-between bg-[#f0f0f0] pl-2 pr-1">
            <ScrollArrow d="M6 1L2 4l4 3z" label="Scroll left" />
            <div className="mr-4 flex h-4 w-4 items-center justify-center gap-[2px] rounded-xs border border-[#888] bg-linear-to-b from-white to-[#ccc]">
              <span className="h-2 w-px bg-[#444]" /><span className="h-2 w-px bg-[#444]" /><span className="h-2 w-px bg-[#444]" />
            </div>
            <ScrollArrow d="M2 1l4 3-4 3z" label="Scroll right" />
          </div>
          <div className="w-4 bg-[#f0f0f0]" />
        </div>
      </div>
      {/* hand drawn pointer over the prompt */}
      <svg width="146" height="20" viewBox="0 0 146 20" className="pointer-events-none absolute left-[491px] top-[56px] z-10" fill="none" stroke="#000" aria-hidden="true">
        <path d="M2 10L74 4v4h67v8H74v2z" strokeLinejoin="round" strokeWidth="4" />
        <path d="M2 10l26-2v4z" fill="#000" />
      </svg>
    </section>
  );
}

/* ---------- status bar ---------- */

const face = 'flex items-center border-r border-[#555] bg-linear-to-b from-[#bcbcbc] to-[#9c9c9c]';

function StatusButton({ icon, on }: { icon: string; on?: boolean }) {
  return (
    <button
      type="button"
      aria-label={icon}
      className={clsx('flex w-[22px] items-center justify-center border-r border-[#555] bg-linear-to-b', on ? 'from-[#d9f0f6] to-[#8fc5d6]' : 'from-[#bcbcbc] to-[#9c9c9c]')}
    >
      {icons[icon]}
    </button>
  );
}

function StatusBar() {
  return (
    <div className="flex h-[21px] items-stretch border-y border-t-black border-b-[#666] bg-linear-to-b from-[#858585] to-[#969696] font-['Liberation_Sans',sans-serif] text-[11px] text-[#111]">
      <div className="flex w-[172px] items-center bg-linear-to-b from-[#777] to-[#999] pl-3 pt-[3px]">11.6667, 15.0017, 0.0000</div>
      <div className="flex border-l border-[#555]">
        {['snap', 'grid', 'ortho'].map((name) => <StatusButton key={name} icon={name} />)}
        {['polar', 'osnap', 'otrack', 'ducs'].map((name) => <StatusButton key={name} icon={name} on />)}
        {['dyn', 'lwt', 'qp'].map((name) => <StatusButton key={name} icon={name} />)}
      </div>
      <div className="flex-1" />
      <div className="flex border-l border-[#555]">
        <button type="button" className={clsx(face, 'w-11 justify-center')}>MODEL</button>
        <StatusButton icon="modelSpace" />
        <StatusButton icon="quickView" />
      </div>
      <div className="ml-[11px] flex border-l border-[#555]">
        {['pan', 'magnifier', 'smallWheel', 'motion'].map((name) => <StatusButton key={name} icon={name} />)}
      </div>
      <div className="ml-[11px] flex border-l border-[#555]">
        <button type="button" className={clsx(face, 'w-[51px] gap-[2px] pl-[2px]')}>
          {icons.annoScale}1:1
          <svg width="8" height="5" viewBox="0 0 8 5" aria-hidden="true"><path d="M0 0h8L4 5z" /></svg>
        </button>
        <StatusButton icon="annoVis" />
        <StatusButton icon="annoAuto" />
      </div>
      <div className="ml-[5px] flex border-l border-[#555]">
        <button type="button" className={clsx(face, 'w-[95px] justify-center gap-[2px] whitespace-nowrap')}>
          {icons.gear}3D Modeling
          <svg width="8" height="5" viewBox="0 0 8 5" className="shrink-0" aria-hidden="true"><path d="M0 0h8L4 5z" /></svg>
        </button>
        <StatusButton icon="unlock" />
      </div>
      <div className="ml-[6px] flex border-l border-[#555]">
        <button type="button" aria-label="Status menu" className={clsx(face, 'w-[13px] justify-center')}><Caret className="text-black" /></button>
        <StatusButton icon="cleanScreen" />
      </div>
      <div className="flex w-[15px] items-end justify-end">
        <svg width="12" height="12" viewBox="0 0 12 12" fill="#ddd" aria-hidden="true"><path d="M9 0h2v2H9zM5 4h2v2H5zM9 4h2v2H9zM1 8h2v2H1zM5 8h2v2H5zM9 8h2v2H9z" /></svg>
      </div>
    </div>
  );
}

/* ---------- taskbar ---------- */

function TaskButton({ label, open, active, children, className }: { label: string; open?: boolean; active?: boolean; children: ReactNode; className: string }) {
  return (
    <button
      type="button"
      aria-label={label}
      className={clsx(
        'flex h-[38px] shrink-0 items-center justify-center',
        open && !active && 'rounded-xs border border-[#8b9aa5] bg-linear-to-br from-[#f4f7f9] to-[#dfe7ec] shadow-[inset_0_0_0_1px_#fff]',
        active && 'rounded-xs border border-[#3577a5] bg-linear-to-br from-[#a4dcfa] to-[#72c4f5] shadow-[inset_0_0_0_1px_#d0effe]',
        className,
      )}
    >
      {children}
    </button>
  );
}

function Taskbar() {
  return (
    <footer className="flex h-10 items-center border-b border-[#5a646c] bg-linear-to-b from-[#e3ebf2] to-[#e9f1f3] font-['Open_Sans',sans-serif]">
      <TaskButton label="Start" className="w-[50px]">
        <svg width="34" height="34" viewBox="0 0 34 34" aria-hidden="true">
          <circle cx="17" cy="17" r="15.5" fill="#2b6299" stroke="#34495e" />
          <path d="M3 15C3 7 9 3 17 3s14 4 14 12c-9 3-19 3-28 0z" fill="#7fa6c9" />
          <path d="M10 30c4-5 10-5 14 0-4 2-10 2-14 0z" fill="#5fa9df" />
          <path d="M26 10c-2-1-5 0-8 2-4-1-7 2-6 4s4 1 4 3-3 2-4 1c-3 2-5 4-4 5 2 1 6-1 8-2 4 1 7-2 6-4s-4-2-3-4 3-1 4-1c2-1 4-3 3-4z" fill="#fff" />
        </svg>
      </TaskButton>
      <TaskButton label="Internet Explorer" className="w-[73px] pl-2">
        <svg width="32" height="32" viewBox="0 0 32 32" fill="none" aria-hidden="true">
          <path d="M27 20c-1 5-5 8-10 8-6 0-11-4-11-11S11 6 17 6s11 5 10 12H13c0 6 7 7 8 2zM13 14h8c0-5-8-5-8 0z" fill="#1b72c4" stroke="#0e4788" />
          <path d="M9 12c2-5 12-7 16-1" stroke="#7fc4f4" strokeWidth="2" />
          <path d="M4 30C-1 26 12 4 26 1c6-1 6 4 3 9 1-5 0-6-3-5C15 8 5 22 6 27c1 2 5 1 7 0-3 3-7 5-9 3z" fill="#f8c02e" stroke="#b98512" strokeWidth="0.5" />
        </svg>
      </TaskButton>
      <TaskButton label="Windows Explorer" open className="w-[60px]">
        <svg width="34" height="32" viewBox="0 0 34 32" aria-hidden="true">
          <path d="M2 4l2-2h8l2 2h4l2-1h8l4 4v20H2z" fill="#f0cd6b" stroke="#b9963c" />
          <path d="M5 3h4v3H5z" fill="#2fa84f" /><path d="M13 5h4v2h-4z" fill="#d04a3a" /><path d="M22 7h6v2h-6z" fill="#3a86c8" />
          <path d="M3 9h28v18H3z" fill="#f9e39b" />
          <path d="M17 9v18" stroke="#e6c970" />
          <path d="M6 31V21c0-2 2-3 4-3h14c2 0 4 1 4 3v10h-5v-7H11v7z" fill="#8ccdec" stroke="#4e9cc5" />
        </svg>
      </TaskButton>
      <TaskButton label="Media Player" className="w-[66px]">
        <svg width="30" height="30" viewBox="0 0 30 30" aria-hidden="true">
          <path d="M20 3l7 1v22l-7 1z" fill="#5fa8d0" stroke="#3b7fa8" />
          <path d="M22 3v24M24.5 4v22" stroke="#cfe7f3" />
          <path d="M2 3l19-1v25l-19-1z" fill="#a3d0e8" stroke="#4d8cb0" />
          <circle cx="12" cy="14.5" r="8.500" fill="#f07d1a" stroke="#d86306" /><path d="M9 9.500l8 5-8 5z" fill="#fff" />
        </svg>
      </TaskButton>
      <TaskButton label="Opera" className="w-[64px]">
        <svg width="32" height="32" viewBox="0 0 32 32" aria-hidden="true">
          <path fillRule="evenodd" d="M16 1c9 0 15 6 15 15s-6 15-15 15S1 25 1 16 7 1 16 1zm0 3c-4 0-5 6-5 12s1 12 5 12 5-6 5-12-1-12-5-12z" fill="#c90f18" />
          <path fillRule="evenodd" d="M16 2c8 0 13 5 14 12h-9c0-6-1-10-5-10s-5 4-5 10H2C3 7 8 2 16 2z" fill="#ea4a4a" />
        </svg>
      </TaskButton>
      <div className="w-[2px]" />
      <TaskButton label="Chrome" open className="w-[54px]">
        <svg width="32" height="32" viewBox="0 0 32 32" aria-hidden="true">
          <circle cx="16" cy="16" r="15" fill="#f5d02c" />
          <path d="M16 9h13.500C26 3 21 1 16 1 10 1 6 4 3.500 8l6 10z" fill="#d4271f" />
          <path d="M9.500 19L3.500 8C-2 18 4 31 15.500 31L22 20z" fill="#4aa74e" />
          <circle cx="16" cy="16" r="7.500" fill="#e6ecf2" /><circle cx="16" cy="14.5" r="6" fill="#2a62a8" />
          <circle cx="16" cy="13" r="3" fill="#7fb2e4" />
        </svg>
      </TaskButton>
      <div className="h-[38px] w-[7px] rounded-r-xs border-r border-[#8b9aa5]" />
      <TaskButton label="Photo Viewer" open className="ml-[3px] w-[60px]">
        <svg width="32" height="28" viewBox="0 0 32 28" aria-hidden="true">
          <path d="M1 8V1h8M23 1h8v7M31 19v7h-8M9 26H1v-7" stroke="#3f86c4" strokeWidth="3" fill="none" />
          <rect x="3.5" y="3.5" width="25" height="20" fill="#62b1ee" stroke="#e6eef4" strokeWidth="2" />
          <path d="M5 9c3-4 6 0 9-2s6-2 8 0 4-1 6-1v7H5z" fill="#d4ecfb" />
          <path d="M4 12c3-2 6-1 9 1s9 1 15 1v3H4z" fill="#2e6b4a" /><path d="M4 16h24v7H4z" fill="#3d8fa5" /><path d="M4 20h24v3H4z" fill="#1f5f86" />
        </svg>
      </TaskButton>
      <TaskButton label="AutoCAD" open active className="ml-1 w-[60px]">
        <span className="relative flex h-[31px] w-[32px] items-end justify-end">
          <span className="flex h-[24px] w-[30px] flex-col items-end border border-[#ccc] bg-white pr-px pt-[2px] text-[7px] font-bold leading-[6px] text-[#d01c22]"><span>20</span><span>10</span></span>
          <RedA className="absolute -left-px -top-px h-6 w-[24px]" />
        </span>
      </TaskButton>
      <div className="flex-1" />
      <div className="flex items-center gap-2 pr-[11px]">
        <svg width="10" height="8" viewBox="0 0 10 8" fill="#fff" stroke="#555" className="mr-2" aria-hidden="true"><path d="M1 6.500h8L5 2z" /></svg>
        <Svg>
          <path d="M2.500 15V1.500M3 2c4-2 5 2 10 0v7c-5 2-6-2-10 0" fill="#fff" stroke="#666" />
          <circle cx="11" cy="11" r="4.500" fill="#dc2f2a" stroke="#a01010" /><path d="M9 9l4 4M13 9l-4 4" stroke="#fff" strokeWidth="1.500" />
        </Svg>
        <Svg>
          <path d="M8 1.500H3c-2 0-2 1-2 2v9c0 2 1 2 2 2h5" fill="#eee" stroke="#555" />
          <path d="M6.500 5.500h8v3c0 2-2 3-4 3s-4-1-4-3zM8.500 5V2M12.500 5V2M10.500 12v3.500H6" fill="#fff" stroke="#555" />
        </Svg>
        <Svg>
          <path d="M.5 11.500h2v3h-2zM3.500 9.500h2v5h-2zM6.500 7.500h2v7h-2zM9.500 4.500h2v10h-2zM12.500 1.500h2v13h-2z" fill="#fff" stroke="#777" />
        </Svg>
        <Svg>
          <path d="M.5 5.500h3L8 1.500v13l-4.500-4h-3z" fill="#eee" stroke="#777" />
          <circle cx="11" cy="11" r="4" fill="#fff" stroke="#d8241f" strokeWidth="1.800" /><path d="M8 8l6 6" stroke="#d8241f" strokeWidth="1.800" />
        </Svg>
      </div>
      <div className="w-[56px] text-center text-[11px] leading-[15px] text-[#222]">
        <p>3:46 PM</p>
        <p>3/16/2012</p>
      </div>
      <button type="button" aria-label="Show desktop" className="ml-1 h-[38px] w-[14px] border border-[#9aa8b2] bg-linear-to-r from-[#f4f8fa] to-[#dbe5ea]" />
    </footer>
  );
}

export default function App() {
  return (
    <div className="flex min-h-screen flex-col bg-[#f0f0f0] font-['Open_Sans',sans-serif]">
      <div className="flex flex-1">
        {/* edge of the browser window behind */}
        <div className="flex w-[6px] shrink-0 flex-col">
          <div className="h-[25px] bg-[#a8c8ec]" />
          <div className="h-[61px] border-b border-[#b5c5d8] bg-[#dbe9f9]" />
          <div className="h-[50px] border-b border-[#ccc] bg-[#f2f2f2]" />
          <div className="h-[44px] bg-white" />
          <div className="flex-1 bg-[#f2f2f2]" />
        </div>
        <div className="flex min-w-0 flex-1 flex-col">
          <div className="h-[3px] bg-[#9dc0ea]" />
          <Header />
          <Ribbon />
          <div className="mb-[2px] mt-px h-[4px] bg-[#6a6a6a]" />
          <div className="flex flex-1 flex-col bg-[#f0f0f0] pl-[2px] pr-[2px]">
            <DrawingArea />
            <LayoutTabs />
          </div>
          <div className="mt-px h-[4px] bg-[#6a6a6a]" />
          <CommandWindow />
          <StatusBar />
        </div>
      </div>
      <Taskbar />
    </div>
  );
}
